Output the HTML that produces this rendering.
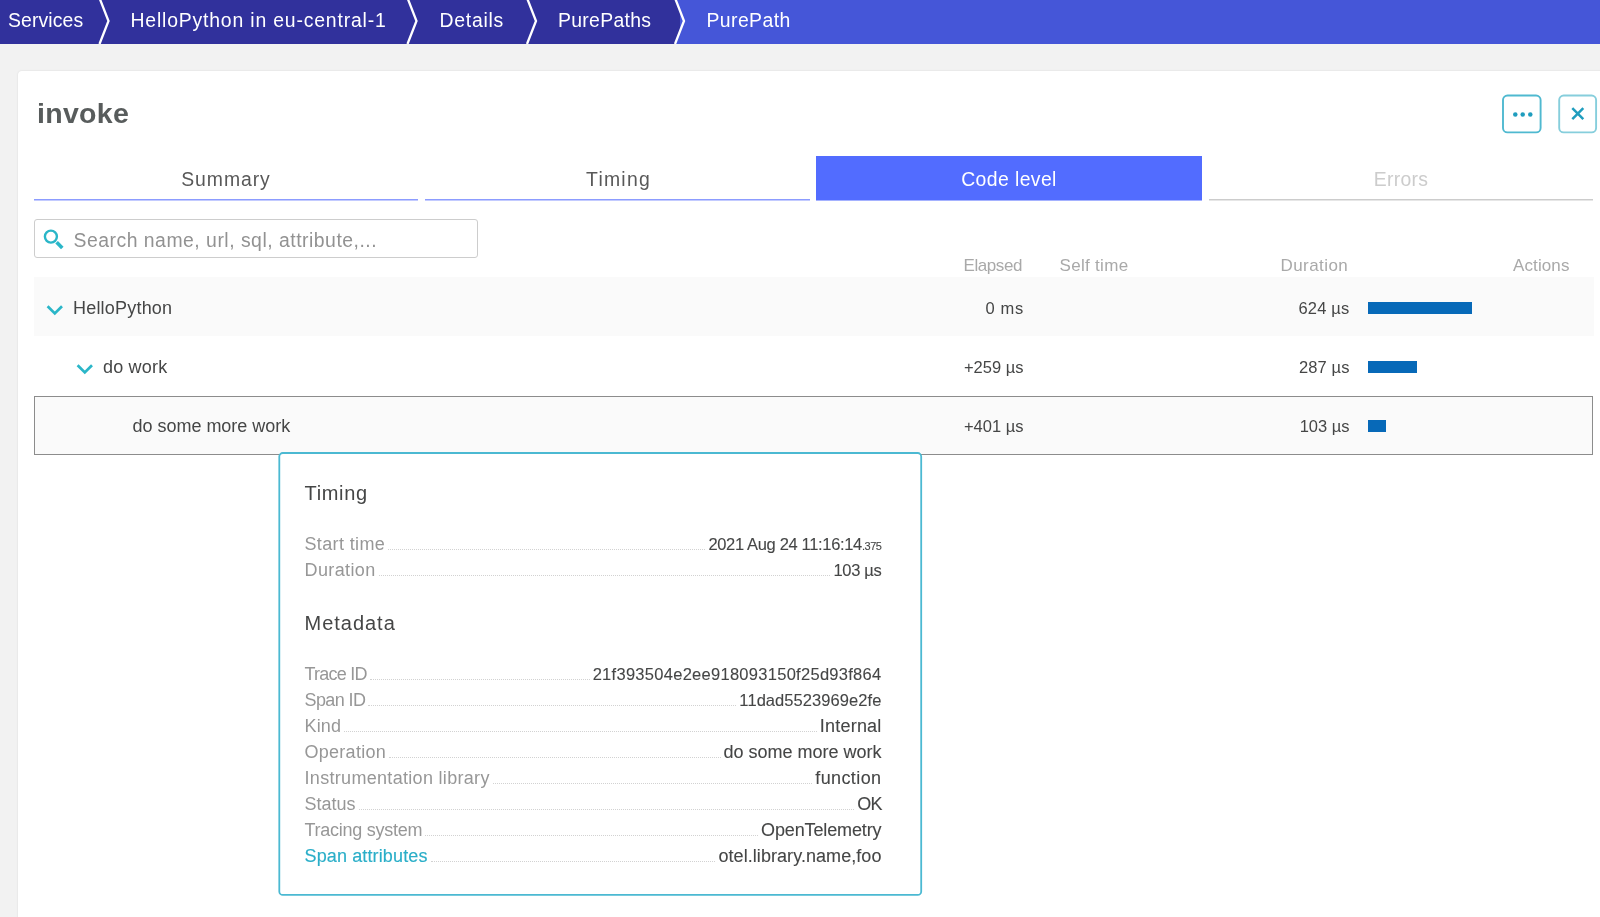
<!DOCTYPE html>
<html>
<head>
<meta charset="utf-8">
<title>PurePath</title>
<style>
html,body{margin:0;padding:0;}
body{width:1600px;height:917px;overflow:hidden;background:#f2f2f2;font-family:"Liberation Sans",sans-serif;color:#454646;position:relative;}
#wrap{position:absolute;left:0;top:0;width:1600px;height:917px;overflow:hidden;will-change:transform;}
.abs{position:absolute;white-space:nowrap;}
/* breadcrumb */
#bc{position:absolute;left:0;top:0;width:1600px;height:44px;background:#31319c;overflow:hidden;}
#bc .act{position:absolute;left:680px;top:0;width:920px;height:44px;background:#4556d8;}
#bc svg{position:absolute;left:0;top:0;}
#bc span{position:absolute;top:0;line-height:41px;font-size:19.4px;color:#fff;white-space:nowrap;}
/* panel */
#panel{position:absolute;left:18px;top:71px;width:1600px;height:900px;background:#fff;border-radius:4px;box-shadow:0 0 2px rgba(0,0,0,0.12);}
#title{left:37px;top:94px;font-size:28.5px;font-weight:700;line-height:38px;color:#585c5c;letter-spacing:.3px;}
/* tabs */
.tab{position:absolute;top:156px;height:43px;border-bottom:1px solid #8c9cff;box-shadow:0 1px 0 #c3cbff;font-size:19.4px;line-height:46px;text-align:center;color:#595959;}
.tab.on{background:#526cff;color:#fff;border-bottom-color:#526cff;box-shadow:0 1px 0 #a5b2ff;}
.tab.dis{color:#ccc;border-bottom:1px solid #ccc;box-shadow:0 1px 0 #e6e6e6;}
/* search */
#search{position:absolute;left:34px;top:219px;width:442px;height:37px;border:1px solid #cdcdcd;border-radius:3px;background:#fff;}
#search span{position:absolute;left:38.5px;top:0;line-height:40px;font-size:19.4px;color:#929292;white-space:nowrap;letter-spacing:.5px;}
/* table */
.th{font-size:17px;color:#a9a9a9;line-height:20px;top:256px;}
.row{position:absolute;left:34px;width:1560px;height:59px;}
.row.alt{background:#fafafa;}
.cell{font-size:18px;line-height:20px;color:#454646;}
.num{font-size:16.5px;}
.bar{position:absolute;left:1368px;height:12px;background:#0769b8;}
/* tooltip */
.h{font-size:20px;line-height:24px;color:#454646;left:304.5px;}
.kv{position:absolute;left:304.5px;width:577px;height:26px;font-size:18px;line-height:26px;display:flex;align-items:baseline;}
.kv .k{color:#979797;white-space:nowrap;}
.kv .d{flex:1;border-bottom:1px dotted #d2d2d2;margin:0 3px 0 3px;position:relative;top:0px;}
.kv .v{color:#454646;white-space:nowrap;-webkit-text-stroke:.1px #454646;}
.kv .v.num{font-size:16.5px;}
.kv .k.lnk{color:#2aaec8;-webkit-text-stroke:.15px #2aaec8;}
.ms{font-size:11px;letter-spacing:-.45px;}
</style>
</head>
<body>
<div id="wrap">

<div id="bc">
  <div class="act"></div>
  <svg width="1600" height="44" viewBox="0 0 1600 44">
    <polygon points="675,-2 684.5,21 675,44 1600,44 1600,-2" fill="#4556d8"/>
    <g fill="none" stroke="#fff" stroke-width="2.3" stroke-linejoin="miter">
      <polyline points="99.5,-2 108.5,21 99.5,44"/>
      <polyline points="407.5,-2 416.5,21 407.5,44"/>
      <polyline points="527,-2 536,21 527,44"/>
      <polyline points="675,-2 684,21 675,44"/>
    </g>
  </svg>
  <span style="left:8px;letter-spacing:.12px">Services</span>
  <span style="left:130.5px;letter-spacing:.82px">HelloPython in eu-central-1</span>
  <span style="left:439.5px;letter-spacing:.74px">Details</span>
  <span style="left:558px;letter-spacing:.3px">PurePaths</span>
  <span style="left:706.5px;letter-spacing:.41px">PurePath</span>
</div>

<div id="panel"></div>

<div id="title" class="abs">invoke</div>

<svg class="abs" style="left:1495px;top:88px" width="105" height="52" viewBox="1495 88 105 52">
  <rect x="1503" y="95.5" width="37.6" height="36.9" rx="4.5" fill="#fff" stroke="#4fb9d0" stroke-width="1.9"/>
  <rect x="1559.2" y="95.5" width="36.9" height="36.9" rx="4.5" fill="#fff" stroke="#86cedc" stroke-width="1.9"/>
  <circle cx="1515.3" cy="114.4" r="2.25" fill="#1f9dbe"/><circle cx="1522.7" cy="114.4" r="2.25" fill="#1f9dbe"/><circle cx="1530.3" cy="114.4" r="2.25" fill="#1f9dbe"/>
  <path d="M1572.3 108.2 L1583.3 119.2 M1583.3 108.2 L1572.3 119.2" stroke="#1f9dbe" stroke-width="2.5" fill="none"/>
</svg>

<div class="tab" style="left:34px;width:384px;letter-spacing:.94px">Summary</div>
<div class="tab" style="left:425px;width:383px;padding-left:2px;letter-spacing:1.23px">Timing</div>
<div class="tab on" style="left:816px;width:386px;letter-spacing:.4px">Code level</div>
<div class="tab dis" style="left:1209px;width:384px;letter-spacing:.28px">Errors</div>

<div id="search">
  <svg class="abs" style="left:8px;top:8px" width="24" height="24" viewBox="0 0 24 24"><circle cx="7.9" cy="8.6" r="6" fill="none" stroke="#2ab6c8" stroke-width="2.4"/><path d="M13.6 14.2 L19.3 19.9" stroke="#2ab6c8" stroke-width="3.6" fill="none"/></svg>
  <span>Search name, url, sql, attribute,...</span>
</div>

<div class="abs th" style="left:963.5px;letter-spacing:-.42px">Elapsed</div>
<div class="abs th" style="left:1059.5px;letter-spacing:.31px">Self time</div>
<div class="abs th" style="left:1280.5px;letter-spacing:.43px">Duration</div>
<div class="abs th" style="left:1513px;letter-spacing:.11px">Actions</div>

<div class="row alt" style="top:277px;height:59px"></div>
<div class="row alt" style="top:396px;height:57px;border:1px solid #8c8c8c;width:1557px;"></div>

<svg class="abs" style="left:45px;top:302px" width="20" height="16" viewBox="0 0 20 16"><polyline points="2.6,4.2 9.8,11.4 17,4.2" fill="none" stroke="#2ab6c8" stroke-width="2.7"/></svg>
<svg class="abs" style="left:75px;top:361px" width="20" height="16" viewBox="0 0 20 16"><polyline points="2.6,4.2 9.8,11.4 17,4.2" fill="none" stroke="#2ab6c8" stroke-width="2.7"/></svg>

<div class="abs cell" style="left:73px;top:298px;letter-spacing:0.2px">HelloPython</div>
<div class="abs cell" style="left:103px;top:357px;letter-spacing:.2px">do work</div>
<div class="abs cell" style="left:132.5px;top:416px;letter-spacing:-.02px">do some more work</div>

<div class="abs cell num" style="right:576px;top:298px;letter-spacing:.7px">0 ms</div>
<div class="abs cell num" style="right:576.5px;top:357px">+259 µs</div>
<div class="abs cell num" style="right:576.5px;top:416px">+401 µs</div>

<div class="abs cell num" style="right:250.5px;top:298px;letter-spacing:.2px">624 µs</div>
<div class="abs cell num" style="right:250.5px;top:357px;letter-spacing:.1px">287 µs</div>
<div class="abs cell num" style="right:250.5px;top:416px">103 µs</div>

<div class="bar" style="top:302px;width:104px"></div>
<div class="bar" style="top:361px;width:49px"></div>
<div class="bar" style="top:420px;width:18px"></div>

<svg class="abs" style="left:270px;top:445px" width="660" height="460" viewBox="270 445 660 460"><rect x="279.3" y="453" width="641.9" height="441.9" rx="3.5" fill="#fff" stroke="#4bb9d2" stroke-width="1.8"/></svg>
<div class="abs h" style="top:481px;letter-spacing:0.66px">Timing</div>
<div class="kv" style="top:531px"><span class="k" style="letter-spacing:0.36px">Start time</span><span class="d"></span><span class="v num" style="letter-spacing:-.34px">2021 Aug 24 11:16:14<span class="ms">.375</span></span></div>
<div class="kv" style="top:557px"><span class="k" style="letter-spacing:0.39px">Duration</span><span class="d"></span><span class="v num" style="letter-spacing:-.3px">103 µs</span></div>
<div class="abs h" style="top:611px;letter-spacing:0.98px">Metadata</div>
<div class="kv" style="top:661px"><span class="k" style="letter-spacing:-0.75px">Trace ID</span><span class="d"></span><span class="v num" style="letter-spacing:0.28px">21f393504e2ee918093150f25d93f864</span></div>
<div class="kv" style="top:687px"><span class="k" style="letter-spacing:-0.6px">Span ID</span><span class="d"></span><span class="v num" style="letter-spacing:0.07px">11dad5523969e2fe</span></div>
<div class="kv" style="top:713px"><span class="k" style="letter-spacing:0.12px">Kind</span><span class="d"></span><span class="v" style="letter-spacing:0.2px">Internal</span></div>
<div class="kv" style="top:739px"><span class="k" style="letter-spacing:0.27px">Operation</span><span class="d"></span><span class="v" style="letter-spacing:-0.01px">do some more work</span></div>
<div class="kv" style="top:765px"><span class="k" style="letter-spacing:0.31px">Instrumentation library</span><span class="d"></span><span class="v" style="letter-spacing:0.4px">function</span></div>
<div class="kv" style="top:791px"><span class="k" style="letter-spacing:0.01px">Status</span><span class="d"></span><span class="v" style="letter-spacing:-0.9px">OK</span></div>
<div class="kv" style="top:817px"><span class="k" style="letter-spacing:-0.25px">Tracing system</span><span class="d"></span><span class="v" style="letter-spacing:-0.12px">OpenTelemetry</span></div>
<div class="kv" style="top:843px"><span class="k lnk" style="letter-spacing:0.13px">Span attributes</span><span class="d"></span><span class="v" style="letter-spacing:0.06px">otel.library.name,foo</span></div>

</div>
</body>
</html>
